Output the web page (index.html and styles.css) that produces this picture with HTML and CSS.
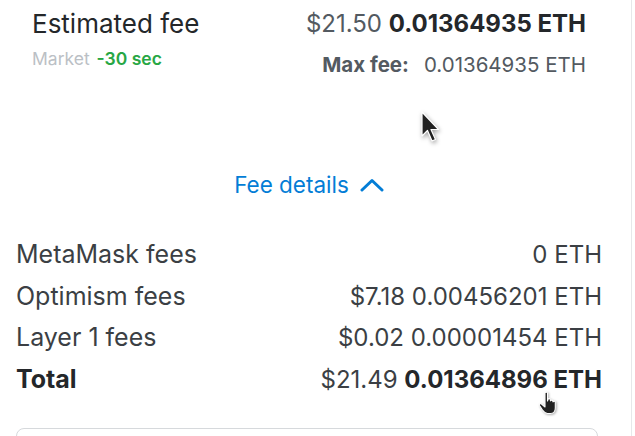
FILE: index.html
```html
<!DOCTYPE html>
<html>
<head>
<meta charset="utf-8">
<link rel="stylesheet" href="styles.css">
</head>
<body>
<div class="panel">
  <section class="estimate">
    <div class="est-row">
      <div class="est-left">
        <div class="est-title">Estimated fee</div>
        <div class="est-sub"><span class="market">Market</span> <span class="time">-30 sec</span></div>
      </div>
      <div class="est-right">
        <div class="est-value"><span class="fiat">$21.50</span> <b>0.01364935 ETH</b></div>
        <div class="est-max"><b>Max fee:</b><span class="max-val">0.01364935 ETH</span></div>
      </div>
    </div>
    <div class="fee-toggle">
      <span>Fee details</span>
      <svg class="chev" width="24" height="14" viewBox="0 0 24 14"><path d="M2 12 L12 2.5 L22 12" fill="none" stroke="#037dd6" stroke-width="3" stroke-linecap="round" stroke-linejoin="round"/></svg>
    </div>
  </section>
  <section class="details">
    <div class="row"><span>MetaMask fees</span><span class="val">0 ETH</span></div>
    <div class="row"><span>Optimism fees</span><span class="val">$7.18 0.00456201 ETH</span></div>
    <div class="row"><span>Layer 1 fees</span><span class="val">$0.02 0.00001454 ETH</span></div>
    <div class="row total"><b>Total</b><span class="val">$21.49 <b>0.01364896 ETH</b></span></div>
  </section>
  <div class="box"></div>
</div>
<svg class="cursor-arrow" width="20" height="34" viewBox="0 0 20 34"><path d="M1 1 L1 25 L6.5 19.5 L11 30 L14.5 28.5 L10 18.5 L17.5 18.5 Z" fill="#222" stroke="#fff" stroke-width="1.2" stroke-linejoin="round"/></svg>
<svg class="cursor-hand" width="22" height="24" viewBox="0 0 22 24"><path d="M7 2 C7 0.8 9.5 0.8 9.5 2 L9.5 10 L10 8.5 C10 7.3 12.3 7.3 12.3 8.5 L12.5 10 C12.6 8.8 14.8 8.8 14.8 10 L15 11 C15.1 9.9 17.3 9.9 17.3 11 L17.3 17 C17.3 20 15.5 22.5 12.5 22.5 L9.5 22.5 C7.5 22.5 6 21 4.5 19 L1.5 14.5 C0.8 13.3 2.3 12 3.5 13 L7 16 Z" fill="#222" stroke="#fff" stroke-width="1.1" stroke-linejoin="round"/></svg>
</body>
</html>
```

FILE: styles.css
```css
html, body {
  margin: 0;
  padding: 0;
  background: #fff;
}
body {
  width: 635px;
  height: 436px;
  overflow: hidden;
  position: relative;
  font-family: Inter, "Noto Sans", sans-serif;
  color: #24272a;
}
.panel {
  width: 632px;
  height: 436px;
  overflow: hidden;
  border-right: 1px solid #e6e8ea;
  box-sizing: border-box;
}
.estimate {
  padding: 8px 45px 0 32px;
}
.est-row {
  display: flex;
  justify-content: space-between;
}
.est-title {
  font-size: 26px;
  line-height: 32px;
  color: #24272a;
}
.est-sub {
  font-size: 17.5px;
  line-height: 20px;
  margin-top: 9px;
}
.market { color: #bbc0c5; }
.time { color: #28a745; font-weight: 600; margin-left: 2px; }
.est-right {
  display: flex;
  flex-direction: column;
  align-items: flex-end;
}
.est-value {
  font-size: 24px;
  line-height: 32px;
}
.fiat { color: #535a61; }
.est-value b { color: #24272a; }
.est-max {
  font-size: 20.5px;
  line-height: 24px;
  margin-top: 13px;
  color: #535a61;
}
.max-val { margin-left: 15px; }
.fee-toggle {
  display: flex;
  justify-content: center;
  align-items: center;
  gap: 11px;
  margin-top: 93px;
  font-size: 22.5px;
  line-height: 30px;
  color: #037dd6;
}
.details {
  padding: 34px 29px 0 16px;
}
.row {
  display: flex;
  justify-content: space-between;
  align-items: baseline;
  font-size: 25px;
  line-height: 41.5px;
  color: #3b3f44;
}
.val { font-size: 24px; }
.row.total b { color: #24272a; }
.box {
  margin: 28px 33px 0 16px;
  height: 30px;
  border: 1px solid #d6d9dc;
  border-radius: 8px;
}
.cursor-arrow {
  position: absolute;
  left: 421px;
  top: 111px;
  filter: blur(0.6px) drop-shadow(1px 2px 2px rgba(0,0,0,0.35));
}
.cursor-hand {
  position: absolute;
  left: 538px;
  top: 391px;
  filter: blur(0.4px) drop-shadow(1px 1px 1px rgba(0,0,0,0.3));
}
```
